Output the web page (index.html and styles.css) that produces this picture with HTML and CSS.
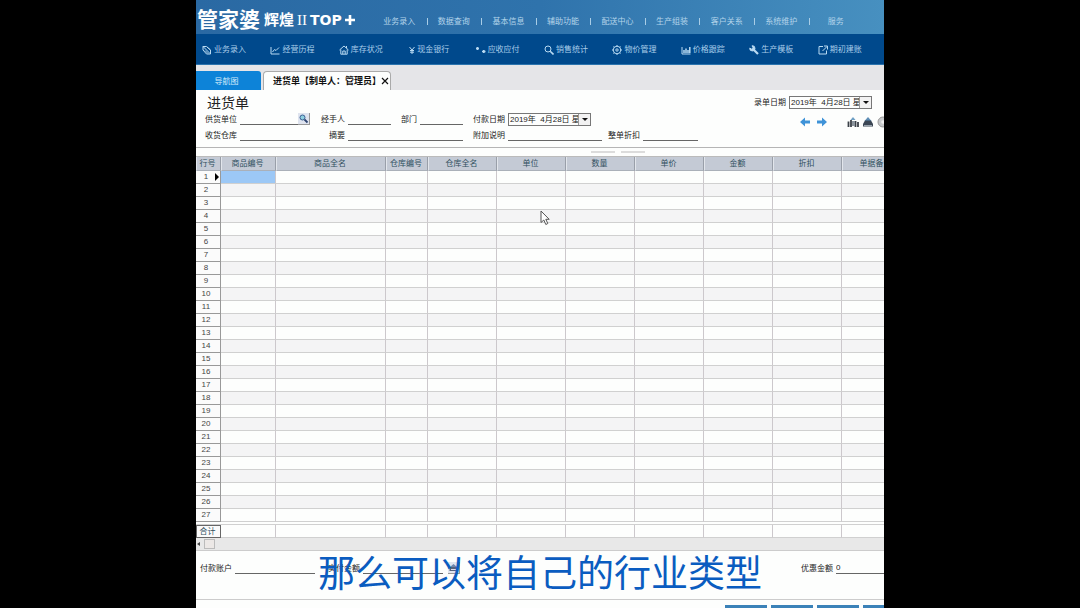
FILE: index.html
```html
<!DOCTYPE html>
<html lang="zh-CN">
<head>
    <meta charset="UTF-8">
    <meta name="viewport" content="width=device-width, initial-scale=1.0">
    <title>进货单</title>
    <link rel="stylesheet" href="styles.css">
</head>
<body>
    <div class="app">
        <header class="banner">
            <h1 class="logo">
                <span class="logo-main">管家婆</span>
                <span class="logo-sub">辉煌</span>
                <span class="logo-two">II</span>
                <span class="logo-top">TOP</span>
                <svg class="logo-plus" viewBox="0 0 12 12"><path d="M6 1v10M1 6h10" stroke="#fff" stroke-width="2.6"/></svg>
            </h1>
            <nav class="menu">
                <a href="#">业务录入</a>
                <a href="#">数据查询</a>
                <a href="#">基本信息</a>
                <a href="#">辅助功能</a>
                <a href="#">配送中心</a>
                <a href="#">生产组装</a>
                <a href="#">客户关系</a>
                <a href="#">系统维护</a>
                <a href="#">服务</a>
            </nav>
        </header>

        <nav class="toolbar">
            <div class="tools">
                <a href="#"><svg viewBox="0 0 10 10"><path d="M1 1.500h3.500l4 3.500v4H4.500L1 5zM1 1.500l7 7M3 5.500l3 3M5 2l3.500 3"/></svg>业务录入</a>
                <a href="#"><svg viewBox="0 0 10 10"><path d="M1 2v7h8.500M2.500 7l2-2.500 1.500 1L9 2.500"/></svg>经营历程</a>
                <a href="#"><svg viewBox="0 0 10 10"><path d="M.5 5L5 1l4.500 4M1.800 4.500V9.200h6.400V4.500M3.800 9V6h2.400v3M7.500 1v2"/></svg>库存状况</a>
                <a href="#" class="narrow"><svg viewBox="0 0 10 10"><path d="M2.500 2L5 5l2.500-3M5 5v4M3 5.500h4M3 7.200h4"/></svg>现金银行</a>
                <a href="#"><svg viewBox="0 0 10 10"><path d="M0 3.500h3M1.500 2v3M6 6.500h3.500M7.800 5v3" stroke-width="1.700"/></svg>应收应付</a>
                <a href="#"><svg viewBox="0 0 10 10"><circle cx="4" cy="4" r="3"/><path d="M6.200 6.200L9.500 9.500" stroke-width="1.600"/></svg>销售统计</a>
                <a href="#"><svg viewBox="0 0 10 10"><circle cx="5" cy="5" r="3.800"/><circle cx="5" cy="5" r="1.200"/><path d="M5 0v1.500M5 8.500V10M0 5h1.500M8.500 5H10M1.500 1.500l1 1M7.500 7.500l1 1M8.500 1.500l-1 1M2.500 7.500l-1 1"/></svg>物价管理</a>
                <a href="#"><svg viewBox="0 0 10 10"><path d="M1 2v7h8.500"/><path d="M3 8V5M5 8V3.500M7 8V5M8.800 8V2" stroke-width="1.500"/></svg>价格跟踪</a>
                <a href="#"><svg viewBox="0 0 10 10"><path d="M4.500 4.500l4.500 4.500" stroke-width="2.200"/><path d="M3 .8a2.600 2.600 0 1 1-2.200 2.200l1.700 1.200 1.500-1.500z" fill="#b9daf2"/></svg>生产模板</a>
                <a href="#"><svg viewBox="0 0 10 10"><path d="M5 1.500H1v7.500h7.500V5.500M6 1h3.500v3.500M9 1.500L4.500 6"/></svg>期初建账</a>
            </div>
        </nav>

        <div class="tabs">
            <button type="button" class="tab">导航图</button>
            <button type="button" class="tab active">进货单【制单人：管理员】<svg viewBox="0 0 8 8"><path d="M1 1l6 6M7 1L1 7" stroke="#111" stroke-width="1.200"/></svg></button>
        </div>

        <form class="sheet">
            <div class="sheet-main">
                <h2>进货单</h2>
                <div class="fields">
                    <label for="supplier">供货单位</label>
                    <div class="field">
                        <input type="text" id="supplier">
                        <button type="button" class="lookup">
                            <svg viewBox="0 0 11 11"><circle cx="4.500" cy="4.500" r="2.500" fill="#8fd0e0" stroke="#3a5f94"/><path d="M6.500 6.500L9.500 9.500" stroke="#2d4470" stroke-width="1.800"/></svg>
                        </button>
                    </div>
                    <label for="handler">经手人</label>
                    <div class="field spread">
                        <input type="text" id="handler">
                        <label for="dept">部门</label>
                        <input type="text" id="dept">
                    </div>
                    <label for="payDate">付款日期</label>
                    <div class="date">
                        <select id="payDate"><option>2019年&nbsp; 4月28日&nbsp;星期日</option></select>
                    </div>
                    <span></span>
                    <span></span>

                    <label for="warehouse">收货仓库</label>
                    <div class="field"><input type="text" id="warehouse"></div>
                    <label for="summary">摘要</label>
                    <div class="field"><input type="text" id="summary"></div>
                    <label for="note">附加说明</label>
                    <div class="field"><input type="text" id="note"></div>
                    <label for="discount">整单折扣</label>
                    <div class="field"><input type="text" id="discount"></div>
                </div>
            </div>
            <div class="sheet-side">
                <div class="record">
                    <label for="recordDate">录单日期</label>
                    <div class="date">
                        <select id="recordDate"><option>2019年&nbsp; 4月28日&nbsp;星期日</option></select>
                    </div>
                </div>
                <div class="actions">
                    <button type="button"><svg viewBox="0 0 12 12"><path d="M1 6l5-4.500v3h5v3H6v3z" fill="#3f93d8"/></svg></button>
                    <button type="button" class="next"><svg viewBox="0 0 12 12"><path d="M11 6L6 1.500v3H1v3h5v3z" fill="#3f93d8"/></svg></button>
                    <button type="button" class="apart"><svg viewBox="0 0 12 12"><path d="M1.500 11V5.500M4 11V4M8.500 11V5M11 11V6" stroke="#3b4148" stroke-width="1.800"/><path d="M3.500 4L6 1l2.500 3z" fill="#6e9fc4"/><path d="M5 5h3v5H5z" fill="#8b949c"/></svg></button>
                    <button type="button"><svg viewBox="0 0 12 12"><path d="M2.500 5L6 1l3.500 4z" fill="#5e8eb6"/><path d="M1 8l2-3.500h6L11 8v2.500H1z" fill="#3b4654"/><path d="M2 9.500h8" stroke="#9aa4ae"/></svg></button>
                    <button type="button"><svg viewBox="0 0 12 12"><circle cx="6" cy="6" r="5" fill="#c6c8ca" stroke="#999"/><circle cx="6" cy="6" r="1.800" fill="#eee"/></svg></button>
                </div>
            </div>
        </form>

        <div class="splitter"><i></i><i></i></div>

        <main class="grid">
            <table>
                <colgroup>
                    <col class="c-no"><col class="c-code"><col class="c-name"><col class="c-store">
                    <col><col><col><col><col><col><col>
                </colgroup>
                <thead>
                    <tr>
                        <th>行号</th>
                        <th>商品编号</th>
                        <th>商品全名</th>
                        <th>仓库编号</th>
                        <th>仓库全名</th>
                        <th>单位</th>
                        <th>数量</th>
                        <th>单价</th>
                        <th>金额</th>
                        <th>折扣</th>
                        <th>单据备注</th>
                    </tr>
                </thead>
                <tbody id="rows"></tbody>
            </table>
            <table class="total">
                <colgroup>
                    <col class="c-no"><col class="c-code"><col class="c-name"><col class="c-store">
                    <col><col><col><col><col><col><col>
                </colgroup>
                <tbody>
                    <tr><th>合计</th><td></td><td></td><td></td><td></td><td></td><td></td><td></td><td></td><td></td><td></td></tr>
                </tbody>
            </table>
            <svg class="pointer" viewBox="0 0 10 16"><path d="M1 1v11.500l2.800-2.500 2 4.500 2-1-2-4.200h3.400z" fill="#fff" stroke="#555"/></svg>
        </main>

        <div class="scrollbar">
            <span class="arrow"></span>
            <span class="thumb"></span>
        </div>

        <form class="payment">
            <label for="account">付款账户</label>
            <input type="text" id="account">
            <label for="paid" class="second">实付金额</label>
            <input type="text" id="paid">
            <button type="button" class="lookup">
                <svg viewBox="0 0 11 11"><path d="M2 5l3.500-3L9 5z" fill="#6f86ad"/><path d="M1.500 5h8v4h-8z" fill="#56627c"/><path d="M3 7.500h5" stroke="#dde"/></svg>
            </button>
            <div class="off">
                <label for="off">优惠金额</label>
                <input type="text" id="off" value="0">
            </div>
        </form>

        <footer class="buttons">
            <button type="button"></button>
            <button type="button"></button>
            <button type="button"></button>
            <button type="button"></button>
        </footer>
    </div>

    <p class="subtitle">那么可以将自己的行业类型</p>

    <script>
        const rows = document.getElementById('rows');

        for (let i = 1; i <= 27; i++) {
            const row = document.createElement('tr');
            const head = document.createElement('th');
            head.textContent = i;
            row.appendChild(head);
            for (let c = 0; c < 10; c++) {
                row.appendChild(document.createElement('td'));
            }
            rows.appendChild(row);
        }

        // first row is the one being edited
        rows.rows[0].className = 'current';
    </script>
</body>
</html>
```

FILE: styles.css
```css
* {
    box-sizing: border-box;
}
body {
    margin: 0;
    background-color: #000;
    font-family: "Liberation Sans", "Noto Sans CJK SC", sans-serif;
    font-size: 8px;
    line-height: 12px;
    color: #222;
    overflow: hidden;
}
a {
    color: inherit;
    text-decoration: none;
}
button,
input,
select {
    font: inherit;
    color: inherit;
    margin: 0;
    padding: 0;
    border: none;
    border-radius: 0;
    background: none;
}
svg {
    display: block;
    fill: none;
}
.app {
    height: 100vh;
    margin: 0 196px;
    background-color: #fdfefd;
    overflow: hidden;
}

/* banner */
.banner {
    display: flex;
    height: 34px;
    padding-right: 21px;
    background: linear-gradient(90deg, #2a69a3, #2f73ac 50%, #4790c0);
    color: #b3d4ea;
}
.logo {
    display: flex;
    align-items: center;
    flex: 0 0 176px;
    margin: 0;
    padding: 6px 0 0 1px;
    color: #fff;
    white-space: nowrap;
}
.logo-main {
    font-size: 21px;
    line-height: 24px;
}
.logo-sub {
    margin-left: 4px;
    font-size: 15px;
}
.logo-two {
    margin: 0 3px;
    font-family: "Liberation Serif", serif;
    font-size: 15px;
    font-weight: normal;
}
.logo-top {
    font-family: "DejaVu Sans", sans-serif;
    font-size: 14px;
}
.logo-plus {
    width: 12px;
    height: 12px;
    margin-left: 2px;
}
.menu {
    display: flex;
    flex: 1;
    padding-top: 16px;
}
.menu a {
    position: relative;
    flex: 1;
    text-align: center;
}
.menu a + a::before {
    content: "";
    position: absolute;
    left: 0;
    top: 2px;
    height: 7px;
    border-left: 1px solid #a9cde6;
}

/* toolbar */
.toolbar {
    height: 31px;
    padding-top: 2px;
    background-color: #00498c;
    border-bottom: 1px solid #2b74ae;
    color: #a9cdea;
    overflow: hidden;
}
.tools {
    display: flex;
    height: 100%;
    margin: 0 -2px 0 6px;
}
.tools a {
    display: flex;
    align-items: center;
    flex: 1;
    gap: 2px;
    white-space: nowrap;
}
.tools svg {
    width: 10px;
    height: 10px;
    stroke: #b9daf2;
}
.tools .narrow {
    gap: 0;
}

/* tabs */
.tabs {
    display: flex;
    align-items: flex-end;
    gap: 2px;
    height: 25px;
    background-color: #e5e5e8;
}
.tab {
    width: 65px;
    height: 19px;
    padding: 2px 4px 0 0;
    border-radius: 0 3px 0 0;
    background-color: #0d83d8;
    color: #d4ebfb;
}
.tab.active {
    display: flex;
    align-items: center;
    width: 128px;
    padding: 0 0 0 9px;
    border: 1px solid #aaa;
    border-bottom: none;
    border-radius: 4px 4px 0 0;
    background-color: #fdfefd;
    font-size: 9px;
    font-weight: bold;
    color: #111;
    white-space: nowrap;
}
.tab svg {
    flex: none;
    width: 8px;
    height: 8px;
}

/* order header */
.sheet {
    display: flex;
    justify-content: space-between;
    height: 58px;
    padding-left: 8px;
    border-bottom: 1px solid #b5b5b5;
}
.sheet h2 {
    margin: 5px 0 2px 3px;
    font-size: 14px;
    font-weight: normal;
    line-height: 16px;
}
.fields {
    display: grid;
    grid-template-columns: 36px 70px 38px 115px 45px 94px 41px 55px;
    grid-template-rows: 13px 13px;
    row-gap: 3px;
    white-space: nowrap;
}
.fields label {
    line-height: 14px;
}
.fields > label {
    padding-right: 3px;
    text-align: right;
}
.field {
    display: flex;
}
.field input,
.payment input {
    flex: 1;
    min-width: 0;
    height: 12px;
    border-bottom: 1px solid #666;
}
.spread input {
    flex: 0 0 43px;
}
.spread {
    justify-content: space-between;
}
.spread label {
    margin-left: 7px;
}
.lookup {
    width: 12px;
    height: 12px;
    border-right: 1px solid #999;
    border-bottom: 1px solid #999;
    background-color: #dfe4ef;
}
.date {
    position: relative;
    width: 83px;
    height: 13px;
}
.date select {
    display: block;
    appearance: none;
    width: 100%;
    height: 13px;
    padding: 0 12px 0 1px;
    border: 1px solid #777;
    line-height: 11px;
    overflow: hidden;
}
.date::before {
    content: "";
    position: absolute;
    right: 1px;
    top: 1px;
    width: 11px;
    height: 11px;
    border-left: 1px solid #999;
    background-color: #f2f2f2;
}
.date::after {
    content: "";
    position: absolute;
    right: 3px;
    top: 5px;
    border: 3px solid transparent;
    border-top-color: #111;
    border-bottom: none;
}
.sheet-side {
    flex: 0 0 130px;
    padding-top: 6px;
    overflow: hidden;
}
.record {
    display: flex;
    gap: 3px;
    line-height: 14px;
}
.actions {
    display: flex;
    gap: 3px;
    padding: 6px 0 0 45px;
}
.actions button {
    flex: 0 0 12px;
}
.actions svg {
    width: 12px;
    height: 12px;
}
.actions .next {
    margin-left: 2px;
}
.actions .apart {
    margin-left: 16px;
}

.splitter {
    display: flex;
    justify-content: center;
    gap: 6px;
    height: 9px;
    padding: 3px 0 0 156px;
    border-bottom: 1px solid #bbb;
}
.splitter i {
    width: 24px;
    height: 2px;
    background-color: #dcdcdc;
}

/* detail grid */
.grid {
    position: relative;
    overflow: hidden;
}
.grid table {
    width: 715px;
    table-layout: fixed;
    border-collapse: separate;
    border-spacing: 0;
}
.c-no {
    width: 25px;
}
.c-code {
    width: 55px;
}
.c-name {
    width: 110px;
}
.c-store {
    width: 42px;
}
.grid th,
.grid td {
    height: 13px;
    padding: 0;
    border-right: 1px solid #ccc8cc;
    border-bottom: 1px solid #d0d0d0;
    font-weight: normal;
    line-height: 12px;
    text-align: center;
    white-space: nowrap;
}
.grid thead th {
    height: 14px;
    padding: 1px 2px 0 0;
    border-right-color: #999fa9;
    border-bottom-color: #aab0b9;
    border-left: 1px solid #e2e6ec;
    background-color: #c4cad5;
    color: #30505f;
}
.grid tbody th {
    padding-right: 4px;
    border-right-color: #999;
    border-bottom-color: #999;
    background-color: #fbfbfb;
    color: #444;
}
.grid tbody tr:nth-child(even) td {
    background-color: #f4f4f5;
}
.grid .current th {
    position: relative;
}
.grid .current th::after {
    content: "";
    position: absolute;
    right: 1px;
    top: 2px;
    border: 4px solid transparent;
    border-left-color: #000;
    border-right: none;
}
.grid .current td:nth-child(2) {
    background-color: #9cc8f6;
}
.grid .total {
    margin-top: 2px;
    border-top: 1px solid #d0d0d0;
}
.grid .total th {
    border: 1px solid #666;
    padding: 0 2px 0 0;
    line-height: 10px;
    color: #30505f;
}
.pointer {
    position: absolute;
    left: 344px;
    top: 53px;
    width: 10px;
    height: 16px;
}

.scrollbar {
    display: flex;
    align-items: center;
    gap: 4px;
    height: 13px;
    padding-left: 1px;
    background-color: #e8e8e8;
    border-bottom: 1px solid #ccc;
}
.arrow {
    border: 2px solid transparent;
    border-right: 3px solid #444;
    border-left: none;
}
.thumb {
    width: 11px;
    height: 10px;
    border: 1px solid #bbb;
    background-color: #ece8e6;
}

/* payment */
.payment {
    display: flex;
    height: 49px;
    padding: 11px 0 0 4px;
    border-bottom: 1px solid #ccc;
    line-height: 14px;
    white-space: nowrap;
}
.payment input {
    flex: none;
    width: 80px;
    margin-left: 3px;
}
.payment .second {
    margin-left: 13px;
}
.payment .lookup {
    margin-left: 5px;
}
.off {
    display: flex;
    margin-left: auto;
}
.off input {
    width: 48px;
}

.buttons {
    display: flex;
    justify-content: flex-end;
    gap: 4px;
    margin: 5px -21px 0 0;
}
.buttons button {
    width: 42px;
    height: 20px;
    background-color: #3b82b8;
}

.subtitle {
    position: absolute;
    left: 0;
    right: 0;
    bottom: 10px;
    margin: 0;
    font-family: "Noto Sans CJK SC", sans-serif;
    font-size: 37px;
    line-height: 54px;
    text-align: center;
    color: #0a5cc0;
}
```
